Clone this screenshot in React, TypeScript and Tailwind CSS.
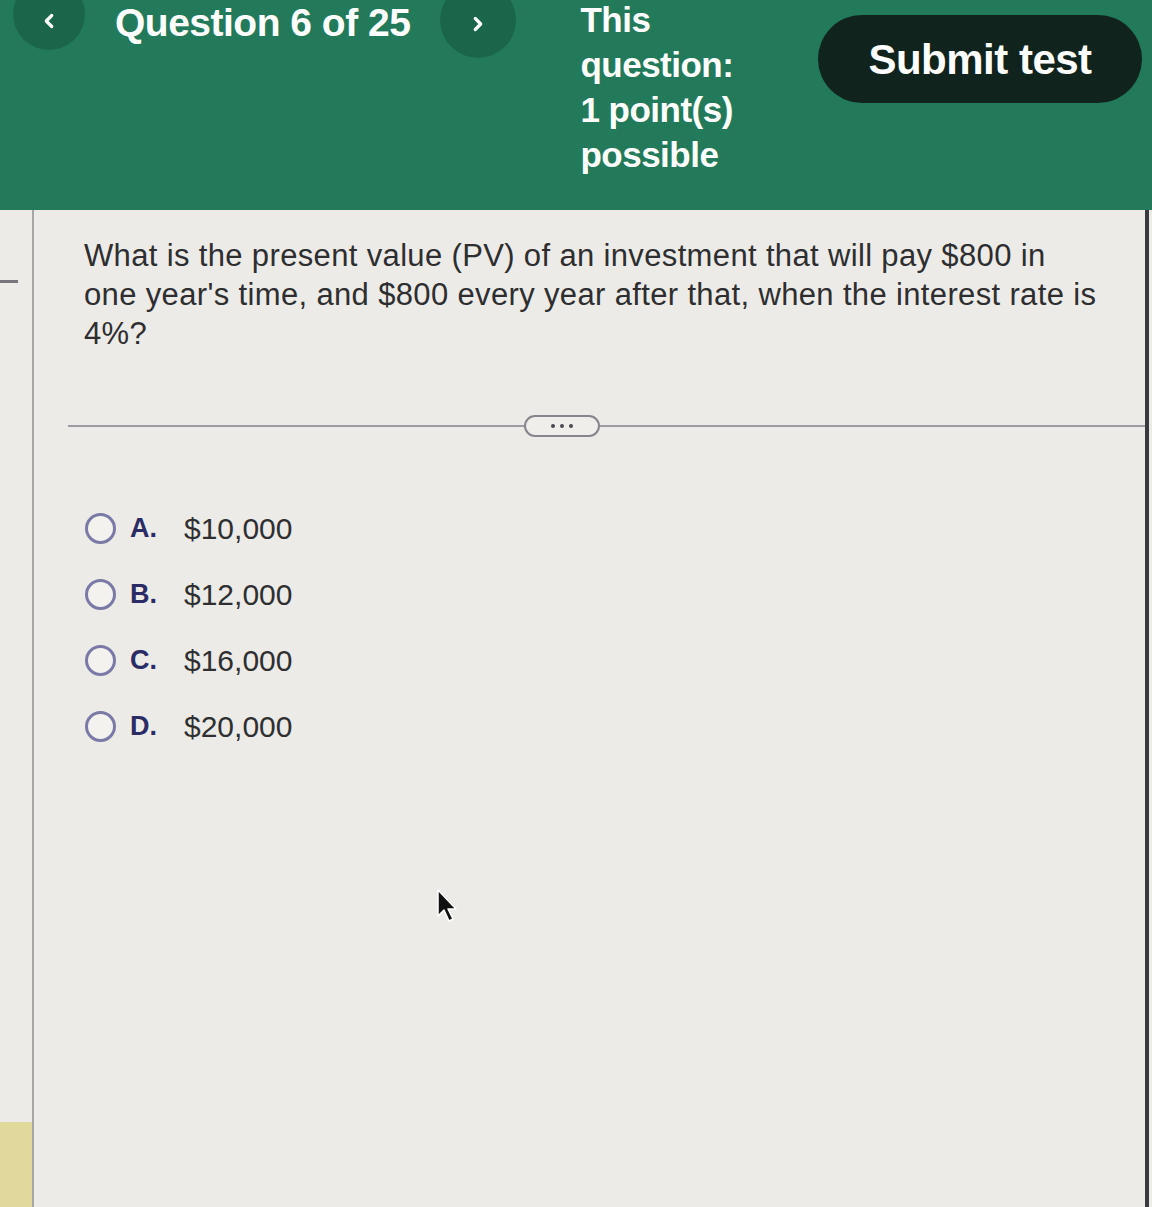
import { ChevronLeft, ChevronRight } from "lucide-react"

const OPTIONS = [
  { letter: "A.", value: "$10,000" },
  { letter: "B.", value: "$12,000" },
  { letter: "C.", value: "$16,000" },
  { letter: "D.", value: "$20,000" },
]

export default function App() {
  return (
    <div className="relative flex h-[1207px] w-[1152px] flex-col overflow-hidden bg-[#ecebe7] font-['Liberation_Sans',Arial,sans-serif]">
      {/* header */}
      <div className="flex h-[210px] shrink-0 items-start bg-[#237a5b] text-white">
        <button className="ml-[13px] mt-[-22px] flex h-[72px] w-[72px] items-center justify-center rounded-full bg-[#1b654b]">
          <ChevronLeft className="mt-[14px] h-[22px] w-[22px]" strokeWidth={3.5} />
        </button>
        <h1 className="ml-[30px] mt-[3px] text-[39px] font-bold leading-none tracking-[-0.5px]">
          Question 6 of 25
        </h1>
        <button className="ml-[30px] mt-[-18px] flex h-[76px] w-[76px] items-center justify-center rounded-full bg-[#1b654b]">
          <ChevronRight className="mt-[8px] h-[22px] w-[22px]" strokeWidth={3.5} />
        </button>
        <div className="ml-[64px] mt-[-3px] w-[200px] text-[35px] font-bold leading-[45px] tracking-[-0.5px]">
          This
          <br />
          question:
          <br />
          <span className="font-semibold">1 point(s)</span>
          <br />
          <span className="font-semibold">possible</span>
        </div>
        <button className="ml-auto mr-[10px] mt-[15px] flex h-[88px] w-[324px] items-center justify-center rounded-full bg-[#11231d] text-[42px] font-bold tracking-[-0.5px]">
          Submit test
        </button>
      </div>

      {/* body */}
      <div className="flex flex-1">
        <div className="relative w-[34px] shrink-0 border-r-2 border-[#a6a5aa]">
          <div className="mt-[70px] h-[3px] w-[18px] bg-[#77767c]" />
          <div className="absolute bottom-0 left-0 h-[85px] w-[32px] bg-[#e1d99b]" />
        </div>

        <div className="mr-[3px] flex flex-1 flex-col border-r-[4px] border-[#3a3a3e]">
          <p className="pl-[50px] pt-[26px] text-[31px] leading-[39px] tracking-[0.35px] text-[#2e2e30]">
            What is the present value (PV) of an investment that will pay $800 in
            <br />
            one year's time, and $800 every year after that, when the interest rate is
            <br />
            4%?
          </p>

          <div className="ml-[34px] mt-[62px] flex items-center">
            <div className="h-[2px] w-[456px] bg-[#9d9ba3]" />
            <button className="flex h-[22px] w-[76px] shrink-0 items-center justify-center gap-[5px] rounded-full border-2 border-[#86848c] bg-[#efeeea]">
              <span className="h-[4px] w-[4px] rounded-full bg-[#4a4950]" />
              <span className="h-[4px] w-[4px] rounded-full bg-[#4a4950]" />
              <span className="h-[4px] w-[4px] rounded-full bg-[#4a4950]" />
            </button>
            <div className="h-[2px] flex-1 bg-[#9d9ba3]" />
          </div>

          <ul className="ml-[51px] mt-[76px] flex flex-col gap-[36px]">
            {OPTIONS.map((o) => (
              <li key={o.letter} className="flex h-[30px] items-center">
                <span className="h-[31px] w-[31px] shrink-0 rounded-full border-[3px] border-[#7b7aa6] bg-[#f3f2ef]" />
                <span className="ml-[14px] w-[54px] text-[27px] font-bold text-[#2b2b66]">{o.letter}</span>
                <span className="text-[30px] text-[#2f2f31]">{o.value}</span>
              </li>
            ))}
          </ul>
        </div>
      </div>

      {/* mouse cursor */}
      <svg
        className="absolute left-[436px] top-[888px]"
        width="24"
        height="36"
        viewBox="0 0 24 36"
      >
        <path
          d="M2 2 L2 28 L8 22 L13 33 L17 31 L12 21 L20 21 Z"
          fill="#111"
          stroke="#fff"
          strokeWidth="1.5"
          strokeLinejoin="round"
        />
      </svg>
    </div>
  )
}
